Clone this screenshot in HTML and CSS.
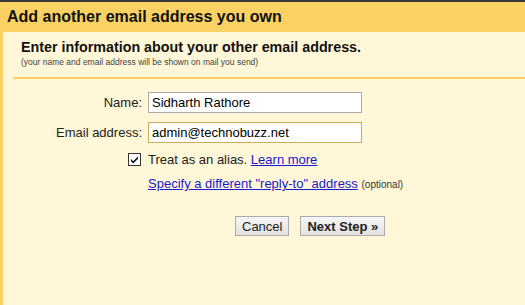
FILE: index.html
```html
<!DOCTYPE html>
<html lang="en">
<head>
    <meta charset="UTF-8">
    <title>Add another email address you own</title>
    <link rel="stylesheet" href="styles.css">
</head>
<body>
    <div class="dialog">
        <div class="title">Add another email address you own</div>
        <div class="panel">
            <div class="intro">
                <div class="intro-head">Enter information about your other email address.</div>
                <div class="intro-note">(your name and email address will be shown on mail you send)</div>
            </div>
            <div class="rule"></div>
            <div class="form">
                <label class="label" for="name">Name:</label>
                <input class="field" type="text" id="name" value="Sidharth Rathore">

                <label class="label" for="email">Email address:</label>
                <input class="field active" type="text" id="email" value="admin@technobuzz.net">

                <span class="check">
                    <svg width="13" height="13" viewBox="0 0 13 13">
                        <rect x="0.5" y="0.5" width="12" height="12" fill="#fff" stroke="#333"/>
                        <path d="M3 6 L5.2 8.3 L10 3.5 L10 5.7 L5.2 10.5 L3 8.2 Z" fill="#111"/>
                    </svg>
                </span>
                <div class="text">Treat as an alias. <a href="#">Learn more</a></div>

                <span></span>
                <div class="text"><a href="#">Specify a different "reply-to" address</a> <span class="optional">(optional)</span></div>

                <span></span>
                <div class="buttons">
                    <button class="btn">Cancel</button>
                    <button class="btn primary">Next Step &raquo;</button>
                </div>
            </div>
        </div>
    </div>
</body>
</html>
```

FILE: styles.css
```css
body {
    margin: 0;
    font-family: "Liberation Sans", Arial, sans-serif;
    background-color: #fff7d7;
    color: #222;
}
.dialog {
    border-top: 2px solid #3a3a3a;
    min-height: 303px;
    display: flex;
    flex-direction: column;
}
.title {
    background-color: #fad163;
    height: 30px;
    line-height: 30px;
    padding-left: 7px;
    font-size: 16px;
    font-weight: bold;
    color: #111;
}
.panel {
    flex: 1;
    border-left: 3px solid #fad163;
    background-color: #fff7d7;
}
.intro {
    padding: 7px 0 0 18px;
}
.intro-head {
    font-size: 14.3px;
    font-weight: bold;
    line-height: 17px;
    color: #111;
}
.intro-note {
    font-size: 8.5px;
    line-height: 12px;
    color: #444;
}
.rule {
    margin: 9px 0 0 10px;
    height: 2px;
    background-color: #fad163;
}
.form {
    display: grid;
    grid-template-columns: 139px 1fr;
    column-gap: 6px;
    row-gap: 9px;
    align-items: center;
    margin-top: 13px;
    font-size: 13px;
}
.label {
    text-align: right;
    color: #222;
}
.field {
    box-sizing: border-box;
    width: 214px;
    height: 21px;
    padding: 0 3px;
    border: 1px solid #aaa;
    background: #fff;
    font-family: inherit;
    font-size: 13px;
    color: #000;
    outline: none;
}
.field.active {
    border-color: #c9ad5c;
}
.check {
    display: flex;
    justify-content: flex-end;
    padding-right: 1px;
}
.check svg {
    display: block;
}
.text {
    line-height: 15px;
}
.text a {
    color: #1a1acc;
    text-decoration: underline;
}
.optional {
    font-size: 10px;
    color: #333;
}
.buttons {
    display: flex;
    gap: 11px;
    padding-left: 87px;
    margin-top: 15px;
}
.btn {
    height: 20px;
    padding: 0 6px;
    border: 1px solid #aaa;
    background: linear-gradient(#f6f6f6, #e2e2e2);
    font-family: inherit;
    font-size: 13px;
    color: #222;
}
.btn.primary {
    font-weight: bold;
    padding: 0 6px;
}
```
